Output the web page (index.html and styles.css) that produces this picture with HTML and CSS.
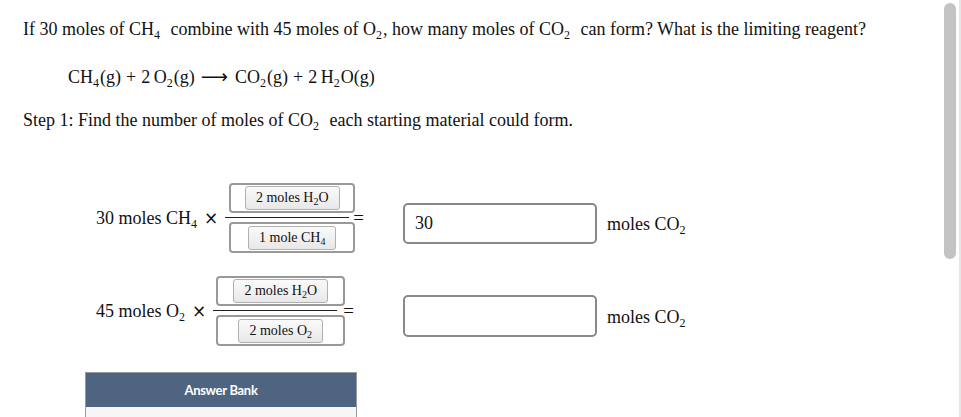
FILE: index.html
```html
<!DOCTYPE html>
<html lang="en">
<head>
  <meta charset="UTF-8">
  <title>Limiting Reagent</title>
  <link rel="stylesheet" href="styles.css">
</head>
<body>

  <div class="page">
    <p class="question">If 30 moles of CH<sub>4</sub> combine with 45 moles of O<sub class="tight">2</sub>, how many moles of CO<sub>2</sub> can form? What is the limiting reagent?</p>

    <p class="equation">CH<sub>4</sub>(g)<span class="op">+</span>2&#8239;O<sub>2</sub>(g)<span class="arrow">&#10230;</span>CO<sub>2</sub>(g)<span class="op">+</span>2&#8239;H<sub>2</sub>O(g)</p>

    <p class="step">Step 1: Find the number of moles of CO<sub>2</sub> each starting material could form.</p>

    <div class="calc">
      <div class="calc-row first">
        <div class="lhs">
          <span class="given">30 moles CH<sub>4</sub></span>
          <span class="times">&times;</span>
          <div class="fraction">
            <div class="slot top"><span class="tile">2 moles H<sub>2</sub>O</span></div>
            <div class="bar"></div>
            <div class="slot bottom"><span class="tile">1 mole CH<sub>4</sub></span></div>
          </div>
          <span class="eq">=</span>
        </div>
        <div class="result">
          <input class="answer" type="text" value="30">
          <span class="unit">moles CO<sub>2</sub></span>
        </div>
      </div>

      <div class="calc-row second">
        <div class="lhs">
          <span class="given">45 moles O<sub>2</sub></span>
          <span class="times">&times;</span>
          <div class="fraction">
            <div class="slot top"><span class="tile">2 moles H<sub>2</sub>O</span></div>
            <div class="bar"></div>
            <div class="slot bottom"><span class="tile">2 moles O<sub>2</sub></span></div>
          </div>
          <span class="eq">=</span>
        </div>
        <div class="result">
          <input class="answer" type="text" value="">
          <span class="unit">moles CO<sub>2</sub></span>
        </div>
      </div>
    </div>

    <div class="bank">
      <div class="bank-head">Answer Bank</div>
      <div class="bank-body"></div>
    </div>
  </div>

  <!-- page scrollbar -->
  <div class="scrollbar"><div class="thumb"></div></div>

</body>
</html>
```

FILE: styles.css
```css
* {
  margin: 0;
  padding: 0;
  box-sizing: border-box;
}

body {
  background: white;
  color: #111;
  font-family: 'Liberation Serif', 'Times New Roman', serif;
  font-size: 18px;
  overflow: hidden;
}

sub {
  font-size: 12px;
  line-height: 0;
  vertical-align: -4px;
  margin-right: 1px;
}

.page {
  padding: 19px 0 0 23px;
}

.question {
  line-height: 20px;
}

.question sub,
.step sub {
  margin-right: 6px;
}

.question sub.tight {
  margin-right: 1px;
}

.equation {
  margin: 27px 0 0 45px;
  line-height: 20px;
}

.equation .op {
  margin: 0 5px;
}

.arrow {
  font-family: 'DejaVu Sans', sans-serif;
  font-size: 19px;
  margin: 0 7px 0 6px;
}

.step {
  margin-top: 23px;
  line-height: 20px;
}

.calc {
  margin: 53px 0 0 73px;
  display: flex;
  flex-direction: column;
  gap: 23px;
}

.calc-row {
  display: flex;
  align-items: center;
}

.lhs {
  width: 307px;
  display: flex;
  align-items: center;
}

.given {
  white-space: nowrap;
}

.times {
  font-family: 'DejaVu Sans', sans-serif;
  font-size: 17px;
  margin: 0 7px 0 6px;
}

.fraction {
  display: flex;
  flex-direction: column;
  align-items: flex-start;
}

.slot {
  width: 126px;
  height: 30px;
  margin-left: 4px;
  border: 2px solid #999;
  border-radius: 4px;
  background: white;
  display: flex;
  align-items: center;
  justify-content: center;
}

.slot.bottom {
  height: 31px;
}

.second .slot {
  width: 129px;
  margin-left: 3px;
}

.bar {
  height: 1px;
  width: 124px;
  background: #222;
  margin: 4px 0;
}

.tile {
  font-size: 14px;
  padding: 3px 10px;
  border: 1px solid #b0b0b0;
  border-radius: 3px;
  background: linear-gradient(#fafafa, #e8e8e8);
  white-space: nowrap;
  line-height: 16px;
}

.tile sub {
  font-size: 10px;
  vertical-align: -3px;
  margin-right: 0;
}

.eq {
  font-size: 19px;
  margin-left: -2px;
}

.result {
  display: flex;
  align-items: center;
  margin-top: 10px;
}

.answer {
  width: 194px;
  height: 41px;
  border: 2px solid #888;
  border-radius: 5px;
  font-family: 'Liberation Serif', 'Times New Roman', serif;
  font-size: 18px;
  padding: 0 10px;
  color: #111;
  outline: none;
}

.second .answer {
  height: 42px;
}

.unit {
  margin-left: 10px;
  margin-top: 2px;
}

.bank {
  margin: 26px 0 0 62px;
  width: 272px;
  border: 1px solid #999;
  border-bottom: none;
}

.bank-head {
  background: #4e6480;
  color: white;
  font-family: Lato, 'Open Sans', sans-serif;
  font-weight: bold;
  font-size: 13px;
  text-align: center;
  height: 34px;
  line-height: 34px;
  letter-spacing: -0.3px;
}

.bank-body {
  background: #f6f6f6;
  height: 20px;
}

.scrollbar {
  position: absolute;
  top: 0;
  right: 0;
  width: 18px;
  height: 417px;
  border-right: 2px solid #e6e6e6;
}

.thumb {
  margin: 3px 0 0 1px;
  width: 12px;
  height: 256px;
  border-radius: 6px;
  background: #c3c3c3;
}
```
